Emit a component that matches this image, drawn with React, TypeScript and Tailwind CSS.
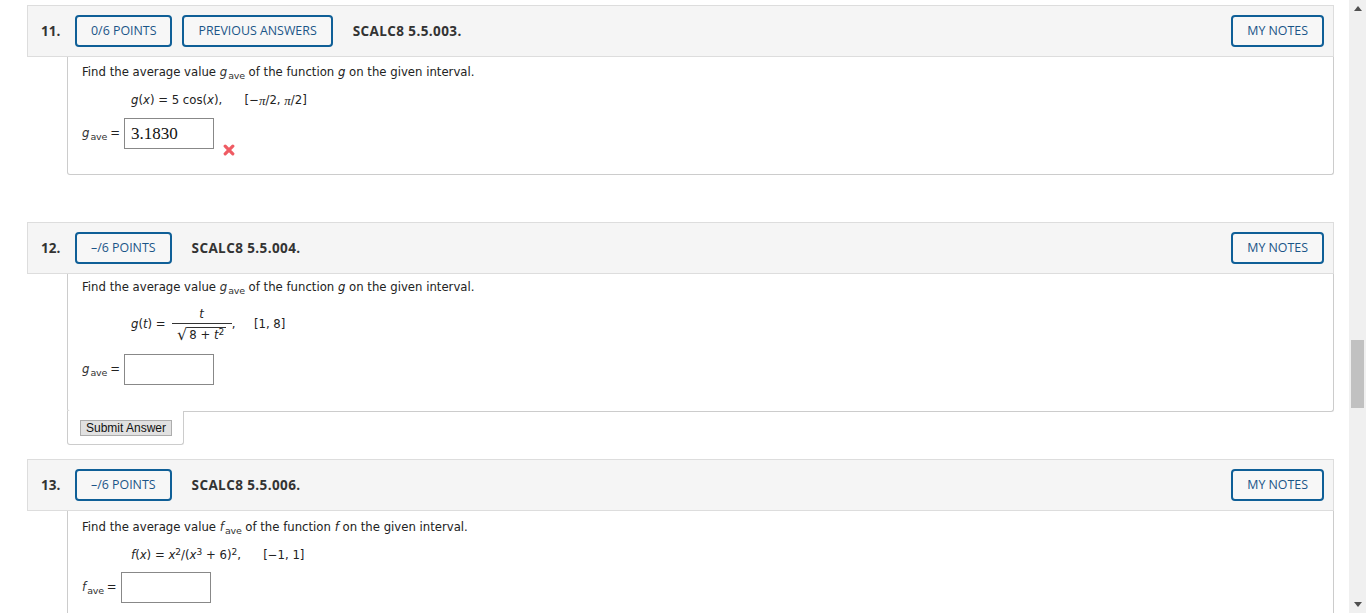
import React from "react";

const body = { fontFamily: '"DejaVu Sans", Verdana, sans-serif' };
const head = { fontFamily: '"Open Sans", sans-serif' };
const serif = { fontFamily: '"Liberation Serif", serif' };

function HeadBtn({ children, last }: { children: React.ReactNode; last?: boolean }) {
  return (
    <div
      className={
        "h-[32px] flex items-center px-[14px] border-2 border-[#0f5f97] rounded-[4px] text-[12.4px] font-medium text-[#1a5587] bg-[#f7f7f7] " +
        (last ? "" : "mr-[10px]")
      }
      style={head}
    >
      {children}
    </div>
  );
}

function Header({ n, btns, title }: { n: string; btns: string[]; title: string }) {
  return (
    <div className="h-[52px] flex items-center border border-[#dddddd] bg-[#f5f5f5] pr-[9px]" style={head}>
      <span className="pl-[13px] w-[47px] text-[13.5px] font-bold text-[#333]">{n}</span>
      {btns.map((b) => (
        <HeadBtn key={b}>{b}</HeadBtn>
      ))}
      <span className="ml-[10px] text-[13.5px] font-bold text-[#333] tracking-[0.4px]">{title}</span>
      <div className="flex-1" />
      <HeadBtn last>MY NOTES</HeadBtn>
    </div>
  );
}

function Ave({ f }: { f: string }) {
  return (
    <span className="inline-flex items-baseline text-[#333]">
      <i>{f}</i>
      <span className="text-[9.5px] tracking-[-0.2px] relative top-[3px] ml-px">ave</span>
    </span>
  );
}

function Label({ f }: { f: string }) {
  return (
    <div className="h-[31px] flex items-center mr-[4px]">
      <Ave f={f} />
      <span className="ml-[3px]">=</span>
    </div>
  );
}

function Input({ value }: { value?: string }) {
  return (
    <div
      className="w-[90px] h-[31px] border border-[#888] bg-white px-[6px] flex items-center text-[17px] text-[#111]"
      style={serif}
    >
      {value}
    </div>
  );
}

function Pi() {
  return (
    <i className="text-[13px]" style={serif}>
      π
    </i>
  );
}

export default function App() {
  return (
    <div className="flex w-[1366px] h-[613px] overflow-hidden bg-white text-[#222]" style={body}>
      <div className="flex-1 pt-[5px]">
        {/* 11 */}
        <div className="ml-[27px] mr-[15px]">
          <Header n="11." btns={["0/6 POINTS", "PREVIOUS ANSWERS"]} title="SCALC8 5.5.003." />
          <div className="ml-[40px] border-x border-b border-[#cccccc] rounded-b-[3px] pl-[14px] pt-[7px] pb-[18px] text-[11.7px]">
            <div className="h-[18px] flex items-center">
              Find the average value&nbsp;<Ave f="g" />&nbsp;of the function&nbsp;<i>g</i>&nbsp;on the given interval.
            </div>
            <div className="mt-[10px] h-[18px] flex items-center pl-[49px] whitespace-pre">
              <i>g</i>(<i>x</i>) = 5 cos(<i>x</i>),      [−<Pi />/2, <Pi />/2]
            </div>
            <div className="mt-[8px] flex items-start">
              <Label f="g" />
              <Input value="3.1830" />
              <svg className="ml-[9px] mt-[26px]" width="12" height="12" viewBox="0 0 12 12">
                <path d="M2.2 2.2 L9.8 9.8 M9.8 2.2 L2.2 9.8" stroke="#ef5b63" strokeWidth="3.2" strokeLinecap="round" />
              </svg>
            </div>
          </div>
          <div className="h-[47px]" />
        </div>

        {/* 12 */}
        <div className="ml-[27px] mr-[15px]">
          <Header n="12." btns={["–/6 POINTS"]} title="SCALC8 5.5.004." />
          <div className="ml-[40px] border-x border-b border-[#cccccc] rounded-b-[3px] pl-[14px] pt-[5px] pb-[26px] text-[11.7px]">
            <div className="h-[18px] flex items-center">
              Find the average value&nbsp;<Ave f="g" />&nbsp;of the function&nbsp;<i>g</i>&nbsp;on the given interval.
            </div>
            <div className="mt-[9px] flex items-center pl-[49px]">
              <span className="whitespace-pre">
                <i>g</i>(<i>t</i>) =
              </span>
              <span className="inline-flex flex-col items-center ml-[6px]">
                <span className="leading-[16px] h-[16px]">
                  <i>t</i>
                </span>
                <span className="w-[60px] h-px bg-[#333] mt-[1px]" />
                <span className="flex items-end mt-[3px]">
                  <span className="text-[16px] leading-[16px]">√</span>
                  <span className="border-t border-[#333] px-[2px] leading-[15px]">
                    8 + <i>t</i>
                    <sup className="text-[9px]">2</sup>
                  </span>
                </span>
              </span>
              <span className="whitespace-pre">,     [1, 8]</span>
            </div>
            <div className="mt-[11px] flex items-start">
              <Label f="g" />
              <Input />
            </div>
          </div>
          <div className="ml-[40px] -mt-px relative w-[117px] h-[34px] bg-white border-x border-b border-[#cccccc] rounded-b-[3px] pl-[12px] pt-[9px] flex items-start">
            <button
              className="h-[16px] px-[5px] bg-[#e1e1e1] border border-[#adadad] text-[12px] leading-[14px] text-[#111]"
              style={{ fontFamily: '"Liberation Sans", Arial, sans-serif' }}
            >
              Submit Answer
            </button>
          </div>
          <div className="h-[14px]" />
        </div>

        {/* 13 */}
        <div className="ml-[27px] mr-[15px]">
          <Header n="13." btns={["–/6 POINTS"]} title="SCALC8 5.5.006." />
          <div className="ml-[40px] border-x border-[#cccccc] pl-[14px] pt-[8px] h-[200px] text-[11.7px]">
            <div className="h-[18px] flex items-center">
              Find the average value&nbsp;<Ave f="f" />&nbsp;of the function&nbsp;<i>f</i>&nbsp;on the given interval.
            </div>
            <div className="mt-[10px] h-[18px] flex items-center pl-[49px] whitespace-pre">
              <i>f</i>(<i>x</i>) = <i>x</i>
              <sup className="text-[9px]">2</sup>/(<i>x</i>
              <sup className="text-[9px]">3</sup> + 6)<sup className="text-[9px]">2</sup>,      [−1, 1]
            </div>
            <div className="mt-[7px] flex items-start">
              <Label f="f" />
              <Input />
            </div>
          </div>
        </div>
      </div>

      {/* scrollbar */}
      <div className="w-[17px] h-full bg-[#f0f0f0] flex flex-col items-center">
        <div className="h-[17px] flex items-center justify-center">
          <svg width="8" height="5" viewBox="0 0 8 5">
            <path d="M0 5 L4 0 L8 5 Z" fill="#505050" />
          </svg>
        </div>
        <div className="mt-[323px] w-[13px] h-[68px] bg-[#c1c1c1]" />
        <div className="flex-1" />
        <div className="h-[17px] flex items-center justify-center">
          <svg width="8" height="5" viewBox="0 0 8 5">
            <path d="M0 0 L4 5 L8 0 Z" fill="#505050" />
          </svg>
        </div>
      </div>
    </div>
  );
}
